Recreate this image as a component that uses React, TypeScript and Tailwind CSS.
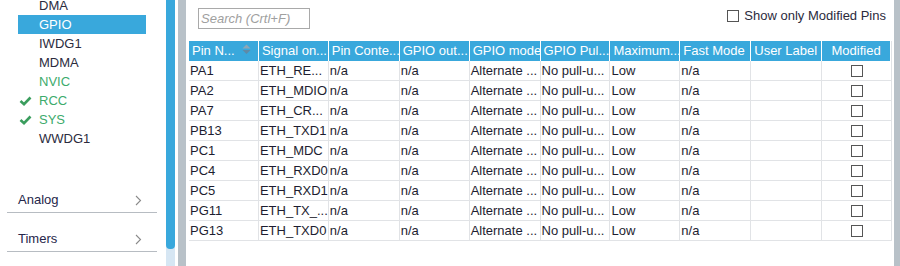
import React from "react";

const font = { fontFamily: "'Liberation Sans', Arial, sans-serif" };

const navItems = [
	{ name: "DMA", state: "plain" },
	{ name: "GPIO", state: "active" },
	{ name: "IWDG1", state: "plain" },
	{ name: "MDMA", state: "plain" },
	{ name: "NVIC", state: "green" },
	{ name: "RCC", state: "checked" },
	{ name: "SYS", state: "checked" },
	{ name: "WWDG1", state: "plain" },
];

const widths = ["w-[70px]", "w-[70px]", "w-[71px]", "w-[70px]", "w-[71px]", "w-[70px]", "w-[70px]", "w-[71px]", "w-[71px]", "w-[69px]"];

const headers = ["Pin N...", "Signal on...", "Pin Conte...", "GPIO out...", "GPIO mode", "GPIO Pul...", "Maximum...", "Fast Mode", "User Label", "Modified"];

const rows = [
	["PA1", "ETH_RE..."],
	["PA2", "ETH_MDIO"],
	["PA7", "ETH_CR..."],
	["PB13", "ETH_TXD1"],
	["PC1", "ETH_MDC"],
	["PC4", "ETH_RXD0"],
	["PC5", "ETH_RXD1"],
	["PG11", "ETH_TX_..."],
	["PG13", "ETH_TXD0"],
];

const Check = () => (
	<svg width="13" height="10" viewBox="0 0 13 10" className="absolute left-[19px] top-[5px]">
		<path d="M1.5 5 L5 8.2 L11.5 1.5" fill="none" stroke="#3a9d5d" strokeWidth="2.6" />
	</svg>
);

const SortIcon = () => (
	<svg width="9" height="11" viewBox="0 0 9 11" className="absolute left-[53px] top-[3px]">
		<path d="M0.5 4.5 L4.5 0.5 L8.5 4.5 Z" fill="#8fa6b5" />
		<path d="M0.5 6 L4.5 10 L8.5 6 Z" fill="#5f8aa6" />
	</svg>
);

const Chevron = () => (
	<svg width="7" height="11" viewBox="0 0 7 11">
		<path d="M1 1 L5.5 5.5 L1 10" fill="none" stroke="#8a8a8a" strokeWidth="1.1" />
	</svg>
);

export default function App() {
	return (
		<div className="flex w-[900px] h-[266px] overflow-hidden bg-white text-[13px]" style={font}>
			{/* sidebar */}
			<div className="w-[166px] flex flex-col">
				<div className="-mt-[4px]">
					{navItems.map((it) => (
						<div key={it.name} className="relative h-[19px]">
							{it.state === "active" ? (
								<div className="ml-[18px] w-[128px] h-[19px] bg-[#39a8dc] text-white pl-[21px] leading-[19px]">{it.name}</div>
							) : (
								<div
									className={
										"pl-[39px] leading-[19px] " +
										(it.state === "plain" ? "text-[#2b2b3d]" : "text-[#3cab6c]")
									}
								>
									{it.name}
								</div>
							)}
							{it.state === "checked" && <Check />}
						</div>
					))}
				</div>
				<div className="mt-[25px] mx-[7px] w-[150px]">
					<div className="flex items-center justify-between pl-[11px] pr-[15px] pt-[19px] pb-[4px] leading-[16px] border-b border-[#b7bcc2] text-[#26264a]">
						<span>Analog</span>
						<Chevron />
					</div>
					<div className="flex items-center justify-between pl-[11px] pr-[15px] pt-[18px] pb-[4px] leading-[16px] border-b border-[#b7bcc2] text-[#26264a]">
						<span>Timers</span>
						<Chevron />
					</div>
				</div>
			</div>

			{/* sidebar scrollbar */}
			<div className="w-[9px] h-full bg-[#d6e6f3] flex flex-col">
				<div className="h-[249px] bg-[#39a8dc] rounded-b-[4px]" />
			</div>
			<div className="w-[3px]" />
			<div className="w-[8px] h-full bg-[#b8c1c8]" />

			{/* main */}
			<div className="w-[708px] pl-[3px] pr-[2px] flex flex-col">
				<div className="h-[41px] flex items-start justify-between">
					<div className="mt-[8px] ml-[9px] w-[112px] h-[21px] border border-[#a9a9a9] pl-[2px] leading-[19px] italic text-[#a0a0a0]">
						Search (Crtl+F)
					</div>
					<div className="mt-[9px] mr-[6px] flex items-center gap-[5px] text-[#2b2b3d] leading-[13px]">
						<div className="w-[12px] h-[12px] border border-[#555]" />
						<span>Show only Modified Pins</span>
					</div>
				</div>

				<div className="w-[703px] border-r border-[#e1e3e6]">
					<div className="flex h-[20px]">
						{headers.map((h, i) => (
							<div
								key={h}
								className={
									widths[i] +
									" relative h-[20px] bg-[#39a8dc] text-white border-r border-white leading-[20px] whitespace-nowrap overflow-hidden " +
									(i === 9 ? "text-center" : "pl-[3px]")
								}
							>
								{h}
								{i === 0 && <SortIcon />}
							</div>
						))}
					</div>
					{rows.map((r) => {
						const cells = [r[0], r[1], "n/a", "n/a", "Alternate ...", "No pull-u...", "Low", "n/a", "", ""];
						return (
							<div key={r[0]} className="flex h-[20px] border-b border-[#e1e3e6] text-[#1d1d30]">
								{cells.map((c, i) => (
									<div
										key={i}
										className={
											widths[i] +
											" h-[19px] leading-[19px] pl-[1px] whitespace-nowrap overflow-hidden " +
											(i < 9 ? "border-r border-[#e1e3e6]" : "flex items-center justify-center")
										}
									>
										{i === 9 ? <div className="w-[12px] h-[12px] border border-[#555]" /> : c}
									</div>
								))}
							</div>
						);
					})}
				</div>
			</div>

			<div className="w-[6px] h-full bg-[#b8c1c8]" />
		</div>
	);
}
